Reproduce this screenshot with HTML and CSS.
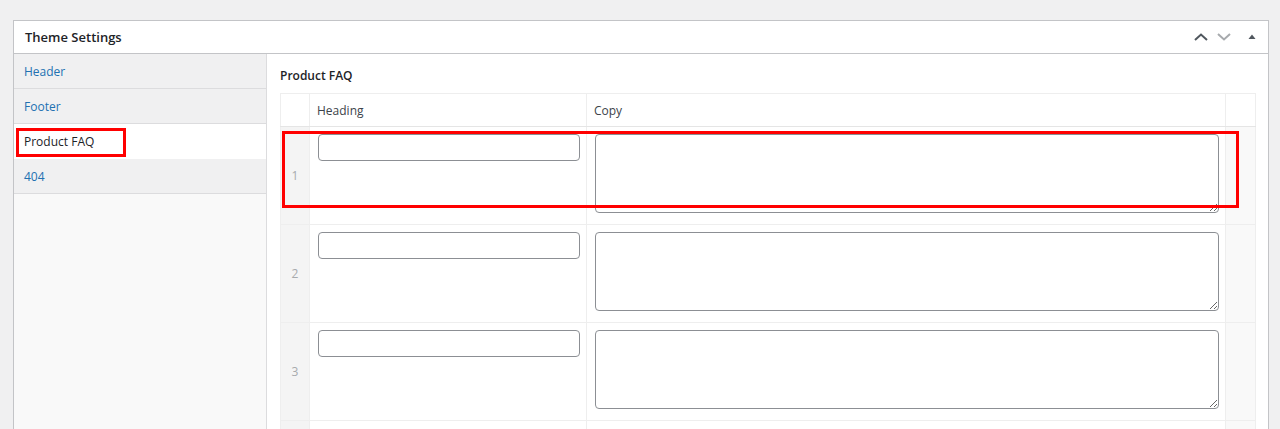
FILE: index.html
```html
<!DOCTYPE html>
<html>
<head>
<meta charset="utf-8">
<link rel="stylesheet" href="styles.css">
</head>
<body>
<div class="postbox">
  <div class="postbox-header">
    <h2 class="postbox-title">Theme Settings</h2>
    <div class="handle-actions">
      <svg class="ico ico-up" width="14" height="8" viewBox="0 0 14 8"><path d="M1 7 L7 1.5 L13 7" fill="none" stroke="currentColor" stroke-width="2"/></svg>
      <svg class="ico ico-down" width="14" height="8" viewBox="0 0 14 8"><path d="M1 1 L7 6.5 L13 1" fill="none" stroke="currentColor" stroke-width="2"/></svg>
      <svg class="ico ico-tri" width="8" height="6" viewBox="0 0 8 6"><path d="M0.5 5 L4 0.5 L7.5 5 Z" fill="currentColor"/></svg>
    </div>
  </div>
  <div class="postbox-body">
    <ul class="tabs">
      <li class="tab"><a>Header</a></li>
      <li class="tab"><a>Footer</a></li>
      <li class="tab active"><a>Product FAQ</a></li>
      <li class="tab"><a>404</a></li>
    </ul>
    <div class="content">
      <div class="field-label">Product FAQ</div>
      <table class="repeater">
        <thead>
          <tr>
            <th class="num"></th>
            <th class="col-heading">Heading</th>
            <th class="col-copy">Copy</th>
            <th class="remove"></th>
          </tr>
        </thead>
        <tbody>
          <tr>
            <td class="num">1</td>
            <td class="col-heading"><input type="text" class="text-input"></td>
            <td class="col-copy"><textarea class="textarea"></textarea></td>
            <td class="remove"></td>
          </tr>
          <tr>
            <td class="num">2</td>
            <td class="col-heading"><input type="text" class="text-input"></td>
            <td class="col-copy"><textarea class="textarea"></textarea></td>
            <td class="remove"></td>
          </tr>
          <tr>
            <td class="num">3</td>
            <td class="col-heading"><input type="text" class="text-input"></td>
            <td class="col-copy"><textarea class="textarea"></textarea></td>
            <td class="remove"></td>
          </tr>
          <tr class="filler">
            <td class="num"></td>
            <td class="col-heading"></td>
            <td class="col-copy"></td>
            <td class="remove"></td>
          </tr>
        </tbody>
      </table>
    </div>
  </div>
</div>
<div class="annot annot-tab"></div>
<div class="annot annot-row"></div>
</body>
</html>
```
FILE: styles.css
```css
* { box-sizing: border-box; }
html, body { margin: 0; padding: 0; }
body {
  background: #f0f0f1;
  font-family: "Open Sans", "Noto Sans", sans-serif;
  font-size: 12px;
  color: #1d2327;
  padding: 20px 12px 0 13px;
  height: 429px;
  overflow: hidden;
  position: relative;
}
.postbox {
  width: 1256px;
  background: #fff;
  border: 1px solid #c3c4c7;
  border-bottom: none;
  height: 409px;
  overflow: hidden;
}
.postbox-header {
  height: 33px;
  border-bottom: 1px solid #c3c4c7;
  display: flex;
  align-items: center;
  justify-content: space-between;
  padding: 0 12px 0 11px;
}
.postbox-title {
  margin: 0;
  font-size: 13px;
  font-weight: 600;
  color: #1d2327;
}
.handle-actions {
  display: flex;
  align-items: center;
}
.ico { display: block; }
.ico-up { color: #50575e; margin-right: 9px; }
.ico-down { color: #a7aaad; margin-right: 17px; }
.ico-tri { color: #50575e; }
.postbox-body {
  display: flex;
  height: 375px;
}
.tabs {
  list-style: none;
  margin: 0;
  padding: 0;
  width: 253px;
  flex: none;
  background: #f9f9f9;
  border-right: 1px solid #dcdcde;
}
.tab {
  height: 35px;
  background: #f0f0f1;
  border-bottom: 1px solid #dcdcde;
  display: flex;
  align-items: center;
  padding-left: 10px;
}
.tab a { color: #2271b1; }
.tab.active {
  background: #fff;
  border-bottom-color: #fff;
}
.tab.active a { color: #1d2327; }
.content {
  padding: 14px 12px 0 13px;
  flex: 1;
}
.field-label {
  font-weight: 600;
  line-height: 16px;
  margin-bottom: 9px;
  color: #1d2327;
}
.repeater {
  border-collapse: collapse;
  width: 976px;
  border: 1px solid #dcdcde;
  table-layout: fixed;
}
.repeater th, .repeater td {
  border: 1px solid #eeeeee;
  padding: 0;
  vertical-align: top;
}
.repeater th {
  height: 33px;
  text-align: left;
  font-weight: 400;
  color: #3c434a;
  padding: 1px 7px 0;
  vertical-align: middle;
  border-bottom-color: #e5e5e5;
}
.repeater .num { width: 29px; }
.repeater .col-heading { width: 277px; }
.repeater .remove { width: 30px; }
.repeater td.num {
  background: #f4f4f4;
  color: #a7aaad;
  text-align: center;
  vertical-align: middle;
  padding: 0;
}
.repeater td.remove { background: #f9f9f9; }
.repeater td.col-heading, .repeater td.col-copy {
  padding: 7px 7px 11px 8px;
}
.repeater tbody tr { height: 98px; }
.repeater tbody tr.filler { height: 20px; }
.text-input {
  display: block;
  width: 262px;
  height: 27px;
  border: 1px solid #8c8f94;
  border-radius: 4px;
  padding: 0 8px;
  font: inherit;
  margin: 0;
}
.textarea {
  display: block;
  width: 624px;
  height: 79px;
  border: 1px solid #8c8f94;
  border-radius: 4px;
  font: inherit;
  margin: 0;
  resize: vertical;
}
.annot {
  position: absolute;
  border: 3px solid #ff0000;
  pointer-events: none;
}
.annot-tab { left: 16px; top: 128px; width: 110px; height: 29px; }
.annot-row { left: 282px; top: 131px; width: 957px; height: 77px; }
```
